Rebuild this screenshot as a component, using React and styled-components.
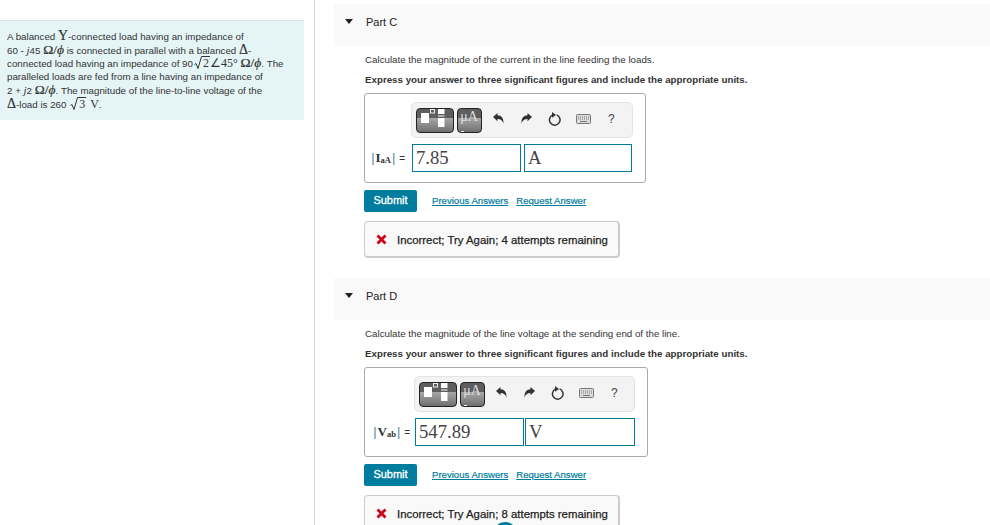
import styled, { createGlobalStyle } from 'styled-components';

const GlobalStyle = createGlobalStyle`
  html, body {
    margin: 0;
    padding: 0;
    height: 525px;
    overflow: hidden;
    background: #fff;
    font-family: "Liberation Sans", Arial, sans-serif;
    color: #222;
  }
`;

const Omega = () => (
  <S.Serif $size={13.5} $heavy>
    Ω/<i>ϕ</i>
  </S.Serif>
);

function Radical({ children }) {
  return (
    <S.Root>
      <svg width="8" height="14" viewBox="0 0 8 14">
        <path d="M0.500 8.500 2 7.500 4 12.500 7.500 0.500H8" fill="none" stroke="#333" strokeWidth="1" />
      </svg>
      <S.RootBody>{children}</S.RootBody>
    </S.Root>
  );
}

function Toolbar({ wide }) {
  return (
    <S.Toolbar $wide={wide}>
      <S.TemplateButton $wide>
        <svg width="36" height="23" viewBox="0 0 36 23">
          <rect x="4" y="4" width="8" height="10" fill="#fff" />
          <rect x="13.500" y="0.500" width="4" height="3.500" fill="none" stroke="#eee" />
          <rect x="21" y="0" width="6.500" height="5" fill="#fff" />
          <rect x="21" y="6.500" width="6.500" height="1" fill="#fff" />
          <rect x="21" y="9" width="6.500" height="9" fill="#fff" />
        </svg>
      </S.TemplateButton>
      <S.TemplateButton>
        <S.MuLabel>μA</S.MuLabel>
        <S.Cursor />
      </S.TemplateButton>
      <S.Tools>
        <svg width="11" height="11" viewBox="0 0 11 11">
          <path d="M0 4 4.500 0v2.300c3.800 0 6.200 2.700 6 8.200C9.500 7.500 7.800 6 4.500 6v2.200z" fill="#333" />
        </svg>
        <svg width="11" height="11" viewBox="0 0 11 11">
          <path d="M11 4 6.500 0v2.300C2.700 2.300.3 5 .5 10.500 1.500 7.500 3.200 6 6.500 6v2.200z" fill="#333" />
        </svg>
        <svg width="14" height="14" viewBox="0 0 14 14">
          <path d="M8.600 2.900a5.300 5.300 0 1 1-4.200.2" fill="none" stroke="#333" strokeWidth="1.500" />
          <path d="M4 0v5.800L8 3z" fill="#333" />
        </svg>
        <svg width="15" height="10" viewBox="0 0 15 10">
          <rect x="0.500" y="0.500" width="14" height="9" rx="1" fill="#ddd" stroke="#777" />
          <path d="M2 3h11M2 5h11" stroke="#777" strokeDasharray="1 1" />
          <path d="M4 7.500h7" stroke="#777" />
        </svg>
        <S.Help>?</S.Help>
      </S.Tools>
    </S.Toolbar>
  );
}

function AnswerBlock({ label, sub, value, unit, attempts, wide }) {
  return (
    <>
      <S.Answer $wide={wide}>
        <S.ToolbarRow $wide={wide}>
          <Toolbar wide={wide} />
        </S.ToolbarRow>
        <S.InputRow $wide={wide}>
          <S.Label>
            <S.Bar>|</S.Bar>
            <S.LabelVar>{label}</S.LabelVar>
            <S.LabelSub>{sub}</S.LabelSub>
            <S.Bar>|</S.Bar> =
          </S.Label>
          <S.Field $value>{value}</S.Field>
          <S.Field $wide={wide}>{unit}</S.Field>
        </S.InputRow>
      </S.Answer>
      <S.Actions>
        <S.Submit>Submit</S.Submit>
        <S.Links>
          <S.Link>Previous Answers</S.Link>
          <S.Link>Request Answer</S.Link>
        </S.Links>
      </S.Actions>
      <S.Alert>
        <svg width="11" height="11" viewBox="0 0 11 11">
          <path d="M1.500 1.500 9.500 9.500M9.500 1.500 1.500 9.500" stroke="#d0021b" strokeWidth="2.800" />
        </svg>
        Incorrect; Try Again; {attempts} attempts remaining
      </S.Alert>
    </>
  );
}

export default function App() {
  return (
    <S.Page>
      <GlobalStyle />
      <S.Aside>
        <S.Problem>
          <S.Line>
            A balanced <S.Serif $heavy>Y</S.Serif>-connected load having an impedance of
          </S.Line>
          <S.Line>
            60 - <S.Serif $size={11}><i>j</i></S.Serif>45 <Omega /> is connected in parallel with a balanced{' '}
            <S.Serif $heavy>Δ</S.Serif>-
          </S.Line>
          <S.Line>
            connected load having an impedance of 90
            <Radical>2</Radical>
            <S.Serif $size={12}>∠45°</S.Serif> <Omega />. The
          </S.Line>
          <S.Line>paralleled loads are fed from a line having an impedance of</S.Line>
          <S.Line>
            2 + <S.Serif $size={11}><i>j</i></S.Serif>2 <Omega />. The magnitude of the line-to-line voltage of the
          </S.Line>
          <S.Line>
            <S.Serif $heavy>Δ</S.Serif>-load is 260 <Radical>3</Radical>
            <S.Volt>V</S.Volt>.
          </S.Line>
        </S.Problem>
      </S.Aside>
      <S.Main>
        <S.Part>
          <S.PartHeader>
            <S.Caret />
            Part C
          </S.PartHeader>
          <S.Body>
            <S.Prompt>Calculate the magnitude of the current in the line feeding the loads.</S.Prompt>
            <S.Hint>Express your answer to three significant figures and include the appropriate units.</S.Hint>
            <AnswerBlock label="I" sub="aA" value="7.85" unit="A" attempts={4} />
          </S.Body>
        </S.Part>
        <S.Part>
          <S.PartHeader>
            <S.Caret />
            Part D
          </S.PartHeader>
          <S.Body>
            <S.Prompt>Calculate the magnitude of the line voltage at the sending end of the line.</S.Prompt>
            <S.Hint>Express your answer to three significant figures and include the appropriate units.</S.Hint>
            <AnswerBlock label="V" sub="ab" value="547.89" unit="V" attempts={8} wide />
          </S.Body>
        </S.Part>
        <S.Badge />
      </S.Main>
    </S.Page>
  );
}

const S = {};

S.Page = styled.div`
  display: flex;
  width: 990px;
  height: 525px;
  overflow: hidden;
`;

S.Aside = styled.aside`
  width: 304px;
  margin-right: 10px;
  padding-top: 20px;
  flex: none;
`;

S.Problem = styled.div`
  height: 100px;
  box-sizing: border-box;
  padding: 8px 0 0 7px;
  background: #e5f5f6;
  border-top: 1px solid #dde3e6;
  font-size: 9.75px;
  color: #333;
`;

S.Line = styled.div`
  height: 13.6px;
  line-height: 13.6px;
  white-space: nowrap;
`;

S.Serif = styled.span`
  font-family: "Liberation Serif", serif;
  font-size: ${(p) => p.$size || 14}px;
  -webkit-text-stroke: ${(p) => (p.$heavy ? '0.2px #333' : '0')};
  color: #333;
  line-height: 1;
`;

S.Volt = styled.span`
  margin-left: 4px;
  font-family: "Liberation Serif", serif;
  font-size: 12px;
  color: #333;
`;

S.Root = styled.span`
  display: inline-flex;
  align-items: flex-start;
  vertical-align: -3px;
  height: 14px;
  margin-left: 1px;
  font-family: "Liberation Serif", serif;
  font-size: 12px;
  line-height: 13px;
`;

S.RootBody = styled.span`
  padding: 0 1px;
  border-top: 1px solid #333;
`;

S.Main = styled.main`
  position: relative;
  flex: 1;
  min-width: 0;
  padding: 4px 0 0 19px;
  border-left: 1px solid #c5d6e6;
`;

S.Part = styled.section`
  margin-bottom: 20px;
`;

S.PartHeader = styled.div`
  display: flex;
  align-items: center;
  box-sizing: border-box;
  height: 42px;
  padding: 0 0 7px 11px;
  background: #f9f9f9;
  font-size: 11px;
  color: #222;
`;

S.Caret = styled.span`
  width: 0;
  height: 0;
  margin-right: 13px;
  border-left: 4px solid transparent;
  border-right: 4px solid transparent;
  border-top: 5px solid #222;
`;

S.Body = styled.div`
  padding: 5px 0 0 30px;
`;

S.Prompt = styled.p`
  margin: 0 0 0 1px;
  height: 19px;
  line-height: 18px;
  font-size: 9.75px;
  color: #333;
`;

S.Hint = styled.p`
  margin: 0 0 5px 1px;
  height: 18px;
  line-height: 19px;
  font-size: 9.75px;
  font-weight: 700;
  color: #333;
`;

S.Answer = styled.div`
  box-sizing: border-box;
  width: ${(p) => (p.$wide ? 284 : 282)}px;
  height: 90px;
  padding: 8px ${(p) => (p.$wide ? 12 : 13)}px 0 0;
  border: 1px solid #aaa;
  border-radius: 3px;
`;

S.ToolbarRow = styled.div`
  display: flex;
  justify-content: flex-end;
  margin-right: ${(p) => (p.$wide ? 0 : -1)}px;
`;

S.Toolbar = styled.div`
  display: flex;
  align-items: center;
  box-sizing: border-box;
  width: ${(p) => (p.$wide ? 221 : 222)}px;
  height: 36px;
  padding: 0 4px;
  gap: 2.5px;
  background: #f3f3f3;
  border: 1px solid #e4e4e4;
  border-radius: 5px;
`;

S.TemplateButton = styled.div`
  position: relative;
  box-sizing: border-box;
  display: flex;
  align-items: flex-start;
  justify-content: center;
  flex: none;
  width: ${(p) => (p.$wide ? 38 : 25)}px;
  height: 25px;
  background: linear-gradient(#5e5e5e 0 40%, #a6a6a6 40%, #6f6f6f 100%);
  border: 1px solid #222;
  border-radius: 4px;
`;

S.MuLabel = styled.span`
  font-family: "Liberation Serif", serif;
  font-size: 14px;
  line-height: 16px;
  color: #ddd;
`;

S.Cursor = styled.span`
  position: absolute;
  left: 3px;
  bottom: 0;
  width: 3px;
  height: 1px;
  background: #fff;
`;

S.Tools = styled.div`
  display: grid;
  grid-template-columns: repeat(5, 28.3px);
  justify-items: center;
  align-items: center;
  margin-bottom: 3px;
`;

S.Help = styled.span`
  font-size: 12px;
  color: #444;
`;

S.InputRow = styled.div`
  display: flex;
  align-items: center;
  justify-content: flex-end;
  gap: ${(p) => (p.$wide ? 1 : 3)}px;
  margin-top: 6px;
`;

S.Label = styled.div`
  margin-right: 4px;
  font-size: 10px;
  color: #333;
  white-space: nowrap;
`;

S.Bar = styled.span`
  margin: 0 1px;
  color: #4c8aa3;
  font-size: 13px;
`;

S.LabelVar = styled.b`
  font-family: "Liberation Serif", serif;
  font-size: 13px;
`;

S.LabelSub = styled.b`
  font-family: "Liberation Serif", serif;
  font-size: 8.5px;
  vertical-align: -1px;
`;

S.Field = styled.div`
  box-sizing: border-box;
  width: ${(p) => (p.$value ? 109 : p.$wide ? 110 : 108)}px;
  height: 28px;
  line-height: 26px;
  padding-left: 3px;
  border: 1px solid #007c9a;
  font-family: "Liberation Serif", serif;
  font-size: 18.7px;
  color: #444;
`;

S.Actions = styled.div`
  display: flex;
  align-items: center;
  margin: 7px 0 9px;
`;

S.Submit = styled.button`
  width: 53px;
  height: 22px;
  padding: 0 0 2px;
  background: #007c9e;
  border: 0;
  border-radius: 2px;
  color: #fff;
  font-family: inherit;
  font-size: 11px;
  -webkit-text-stroke: 0.3px #fff;
`;

S.Links = styled.div`
  display: flex;
  gap: 8px;
  margin: -1px 0 0 15px;
`;

S.Link = styled.span`
  color: #007c9e;
  font-size: 9.6px;
  -webkit-text-stroke: 0.2px #007c9e;
  text-decoration: underline;
`;

S.Alert = styled.div`
  display: flex;
  align-items: center;
  gap: 10px;
  box-sizing: border-box;
  width: 256px;
  height: 37px;
  padding: 1px 0 0 11px;
  background: #f9f9f9;
  border: 1px solid #ccc;
  border-right-width: 2px;
  border-bottom-width: 2px;
  border-radius: 4px;
  font-size: 11.4px;
  -webkit-text-stroke: 0.25px #222;
  color: #222;
`;

S.Badge = styled.div`
  position: absolute;
  left: 178px;
  top: 522px;
  width: 24px;
  height: 24px;
  border-radius: 50%;
  background: #007c9e;
`;
